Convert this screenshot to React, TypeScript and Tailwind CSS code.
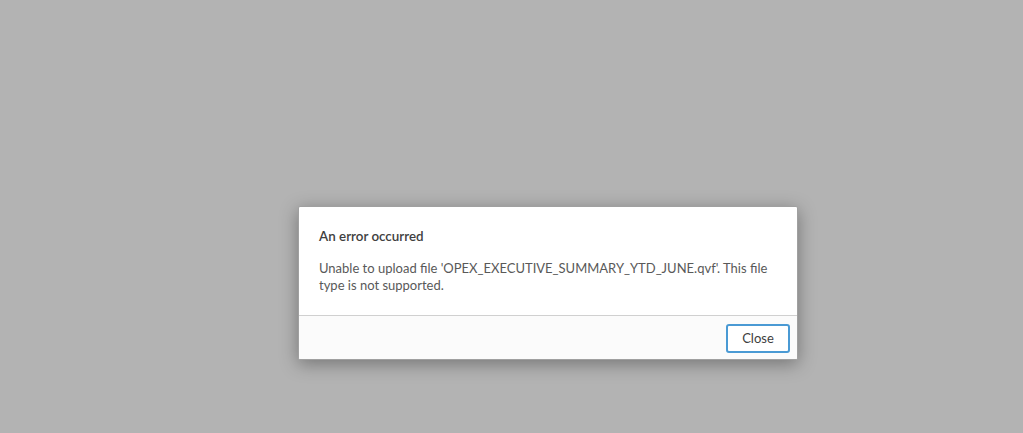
export default function App() {
  return (
    <main className="min-h-screen w-full bg-[#b3b3b3] pl-[298px] pt-[206px] font-['Lato','Open_Sans',sans-serif]">
      <div className="w-[500px] overflow-hidden rounded-[2px] border border-[#a0a0a0] bg-white shadow-[0_4px_18px_rgba(0,0,0,0.35)]">
        <div className="px-5 pb-[21px] pt-[20px]">
          <h2 className="text-[13.4px] font-semibold leading-[18px] text-[#404040]">
            An error occurred
          </h2>
          <p className="mt-[15px] whitespace-nowrap text-[13px] leading-[17px] text-[#595959]">
            Unable to upload file 'OPEX_EXECUTIVE_SUMMARY_YTD_JUNE.qvf'. This file
            <br />
            type is not supported.
          </p>
        </div>
        <div className="flex justify-end border-t border-[#d0d0d0] bg-[#fbfbfb] px-[7px] pb-[6px] pt-[8px]">
          <button className="h-[29px] w-[64px] rounded-[3px] border-2 border-[#4a9ad4] bg-white text-[13px] text-[#404040]">
            Close
          </button>
        </div>
      </div>
    </main>
  );
}
